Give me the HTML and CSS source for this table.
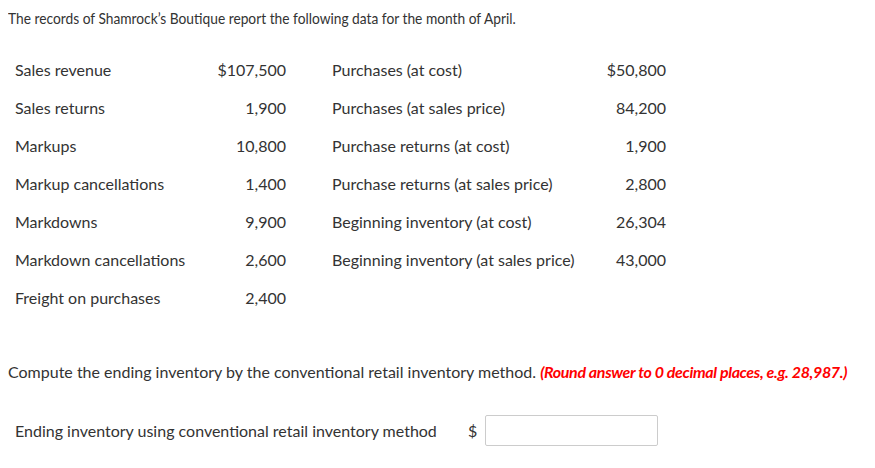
FILE: index.html
```html
<!DOCTYPE html>
<html>
<head>
<meta charset="utf-8">
<link rel="stylesheet" href="styles.css">
</head>
<body>
<div class="page">
  <p class="intro">The records of Shamrock’s Boutique report the following data for the month of April.</p>
  <div class="data">
    <div class="lbl">Sales revenue</div><div class="amt">$107,500</div><div class="lbl2">Purchases (at cost)</div><div class="amt">$50,800</div>
    <div class="lbl">Sales returns</div><div class="amt">1,900</div><div class="lbl2">Purchases (at sales price)</div><div class="amt">84,200</div>
    <div class="lbl">Markups</div><div class="amt">10,800</div><div class="lbl2">Purchase returns (at cost)</div><div class="amt">1,900</div>
    <div class="lbl">Markup cancellations</div><div class="amt">1,400</div><div class="lbl2">Purchase returns (at sales price)</div><div class="amt">2,800</div>
    <div class="lbl">Markdowns</div><div class="amt">9,900</div><div class="lbl2">Beginning inventory (at cost)</div><div class="amt">26,304</div>
    <div class="lbl">Markdown cancellations</div><div class="amt">2,600</div><div class="lbl2">Beginning inventory (at sales price)</div><div class="amt">43,000</div>
    <div class="lbl">Freight on purchases</div><div class="amt">2,400</div><div class="lbl2"></div><div class="amt"></div>
  </div>
  <p class="question">Compute the ending inventory by the conventional retail inventory method. <span class="hint">(Round answer to 0 decimal places, e.g. 28,987.)</span></p>
  <div class="answer">
    <span class="alabel">Ending inventory using conventional retail inventory method</span>
    <span class="dollar">$</span>
    <input class="box" type="text">
  </div>
</div>
</body>
</html>
```
FILE: styles.css
```css
html, body {
  margin: 0;
  padding: 0;
  background: #fff;
}
body {
  font-family: Lato, "Open Sans", sans-serif;
  font-size: 16px;
  color: #333;
}
.page {
  padding: 8px 8px 0 8px;
}
.intro {
  margin: 0;
  line-height: 20px;
  white-space: nowrap;
  transform: scaleX(0.86);
  transform-origin: left center;
}
.data {
  display: grid;
  grid-template-columns: 200px 71px 296px 84px;
  grid-auto-rows: 38px;
  align-items: center;
  margin-top: 22px;
  padding-left: 7px;
}
.amt {
  text-align: right;
}
.lbl2 {
  padding-left: 46px;
}
.question {
  margin: 47px 0 0 0;
  line-height: 18px;
  white-space: nowrap;
}
.hint {
  color: #f00;
  font-weight: bold;
  font-style: italic;
  letter-spacing: -0.35px;
}
.answer {
  display: flex;
  align-items: center;
  margin-top: 34px;
  padding-left: 7px;
}
.alabel {
  width: 453px;
}
.dollar {
  width: 17px;
}
.box {
  width: 173px;
  height: 31px;
  box-sizing: border-box;
  border: 1px solid #ccc;
  border-radius: 2px;
  margin: 0;
  padding: 0 6px;
  font: inherit;
}
```
